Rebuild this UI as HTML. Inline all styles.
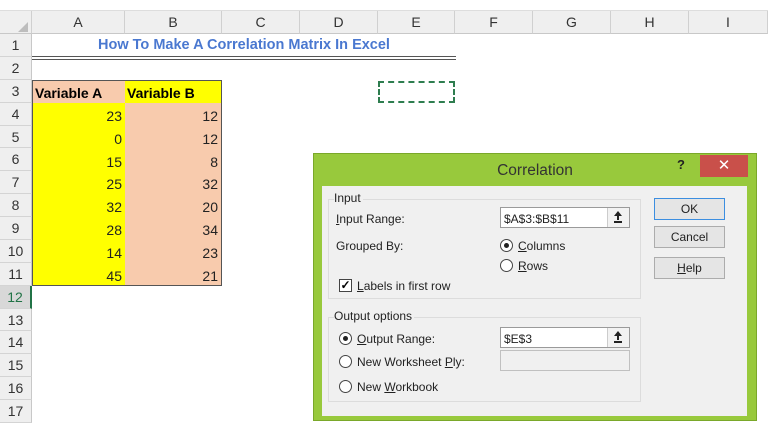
<!DOCTYPE html>
<html><head><meta charset="utf-8"><style>
*{margin:0;padding:0;box-sizing:border-box}
body{width:768px;height:426px;overflow:hidden;background:#fff;font-family:"Liberation Sans",sans-serif;position:relative}
.a{position:absolute}
.ch{position:absolute;top:11px;height:23px;background:#efefef;border-right:1px solid #d0d0d0;border-bottom:1px solid #c8c8c8;font-size:14px;color:#333;text-align:center;line-height:23px}
.rh{position:absolute;left:0;width:32px;background:#efefef;border-bottom:1px solid #d4d4d4;border-right:1px solid #c8c8c8;font-size:14px;color:#333;text-align:center}
.c{position:absolute;font-size:14px;color:#222;text-align:right;padding-right:3px}
.t{position:absolute;font-size:12px;color:#222;white-space:nowrap}
.rad{position:absolute;width:13px;height:13px;border:1px solid #444;border-radius:50%;background:#fff}
.rad.on::after{content:"";position:absolute;left:3px;top:3px;width:5px;height:5px;border-radius:50%;background:#222}
.box{position:absolute;background:#fff;border:1px solid #9a9a9a}
.up{position:absolute;width:22px;border-left:1px solid #ccc;background:#f2f2f2}
.up::before{content:"";position:absolute;left:6px;top:3px;width:0;height:0;border-left:4px solid transparent;border-right:4px solid transparent;border-bottom:5px solid #222}
.up i{position:absolute;left:9px;top:8px;width:2px;height:4px;background:#222}
.up::after{content:"";position:absolute;left:6px;top:13px;width:8px;height:2px;background:#222}
.btn{position:absolute;left:654px;width:71px;height:22px;border:1px solid #acacac;background:#e5e5e5;font-size:12px;text-align:center;line-height:20px;color:#222}
u{text-decoration:underline}
</style></head><body>
<div class="a" style="left:0;top:0;width:768px;height:11px;background:#fff;border-bottom:1px solid #ddd"></div>
<div class="ch" style="left:0;width:32px"></div>
<div class="a" style="left:18px;top:22px;width:0;height:0;border-left:10px solid transparent;border-bottom:10px solid #bdbdbd"></div>
<div class="ch" style="left:32px;width:93px">A</div>
<div class="ch" style="left:125px;width:97px">B</div>
<div class="ch" style="left:222px;width:78px">C</div>
<div class="ch" style="left:300px;width:78px">D</div>
<div class="ch" style="left:378px;width:77px">E</div>
<div class="ch" style="left:455px;width:78px">F</div>
<div class="ch" style="left:533px;width:78px">G</div>
<div class="ch" style="left:611px;width:78px">H</div>
<div class="ch" style="left:689px;width:79px">I</div>

<div class="rh" style="top:34px;height:23px;line-height:23px">1</div>
<div class="rh" style="top:57px;height:23px;line-height:23px">2</div>
<div class="rh" style="top:80px;height:23px;line-height:23px">3</div>
<div class="rh" style="top:103px;height:23px;line-height:23px">4</div>
<div class="rh" style="top:126px;height:22px;line-height:22px">5</div>
<div class="rh" style="top:148px;height:23px;line-height:23px">6</div>
<div class="rh" style="top:171px;height:23px;line-height:23px">7</div>
<div class="rh" style="top:194px;height:23px;line-height:23px">8</div>
<div class="rh" style="top:217px;height:23px;line-height:23px">9</div>
<div class="rh" style="top:240px;height:23px;line-height:23px">10</div>
<div class="rh" style="top:263px;height:23px;line-height:23px">11</div>
<div class="rh" style="top:286px;height:23px;line-height:23px;background:#d8d8d8;color:#217346;border-right:2px solid #217346">12</div>
<div class="rh" style="top:309px;height:22px;line-height:22px">13</div>
<div class="rh" style="top:331px;height:23px;line-height:23px">14</div>
<div class="rh" style="top:354px;height:23px;line-height:23px">15</div>
<div class="rh" style="top:377px;height:23px;line-height:23px">16</div>
<div class="rh" style="top:400px;height:23px;line-height:23px">17</div>

<div class="a" style="left:32px;top:37px;width:424px;text-align:center;font-size:14.5px;font-weight:bold;color:#4a78d0">How To Make A Correlation Matrix In Excel</div>
<div class="a" style="left:32px;top:56px;width:424px;height:4px;border-top:1px solid #555;border-bottom:1px solid #555"></div>
<div class="a" style="left:378px;top:81px;width:77px;height:22px;border:2px dashed #2e7d4f"></div>

<div class="a" style="left:32px;top:80px;width:190px;height:206px;border:1px solid #555"></div>
<div class="a" style="left:33px;top:81px;width:92px;height:22px;background:#f8cbad;font-size:14px;font-weight:bold;line-height:25px;padding-left:2px">Variable A</div>
<div class="a" style="left:125px;top:81px;width:96px;height:22px;background:#ffff00;font-size:14px;font-weight:bold;line-height:25px;padding-left:2px">Variable B</div>
<div class="a" style="left:33px;top:103px;width:92px;height:182px;background:#ffff00"></div>
<div class="a" style="left:125px;top:103px;width:96px;height:182px;background:#f8cbad"></div>
<div class="c" style="left:33px;top:105px;width:92px;line-height:22.8px">23<br>0<br>15<br>25<br>32<br>28<br>14<br>45</div>
<div class="c" style="left:125px;top:105px;width:96px;line-height:22.8px">12<br>12<br>8<br>32<br>20<br>34<br>23<br>21</div>

<!-- dialog -->
<div class="a" style="left:313px;top:153px;width:444px;height:268px;background:#98c93c;border:1px solid #7aa82a"></div>
<div class="a" style="left:313px;top:162px;width:444px;text-align:center;font-size:15.5px;color:#333">Correlation</div>
<div class="a" style="left:677px;top:157px;font-size:13px;font-weight:bold;color:#222">?</div>
<div class="a" style="left:700px;top:155px;width:48px;height:22px;background:#c9504a;color:#fff;text-align:center;font-size:15px;line-height:22px">✕</div>
<div class="a" style="left:322px;top:186px;width:425px;height:230px;background:#f0f0f0"></div>

<div class="a" style="left:328px;top:199px;width:313px;height:100px;border:1px solid #dcdcdc"></div>
<div class="t" style="left:334px;top:191px;background:#f0f0f0;padding-right:2px">Input</div>
<div class="t" style="left:336px;top:212px"><u>I</u>nput Range:</div>
<div class="box" style="left:500px;top:207px;width:130px;height:21px"></div>
<div class="t" style="left:504px;top:212px">$A$3:$B$11</div>
<div class="up" style="left:607px;top:208px;height:19px"><i></i></div>
<div class="t" style="left:336px;top:239px">Grouped By:</div>
<div class="rad on" style="left:500px;top:239px"></div>
<div class="t" style="left:518px;top:239px"><u>C</u>olumns</div>
<div class="rad" style="left:500px;top:259px"></div>
<div class="t" style="left:518px;top:259px"><u>R</u>ows</div>
<div class="a" style="left:339px;top:279px;width:13px;height:13px;border:1px solid #444;background:#fff;font-size:12px;line-height:11px;text-align:center;font-weight:bold">✓</div>
<div class="t" style="left:357px;top:279px"><u>L</u>abels in first row</div>

<div class="a" style="left:328px;top:317px;width:313px;height:85px;border:1px solid #dcdcdc"></div>
<div class="t" style="left:334px;top:309px;background:#f0f0f0;padding-right:2px">Output options</div>
<div class="rad on" style="left:339px;top:332px"></div>
<div class="t" style="left:357px;top:332px"><u>O</u>utput Range:</div>
<div class="box" style="left:500px;top:327px;width:130px;height:21px"></div>
<div class="t" style="left:504px;top:332px">$E$3</div>
<div class="up" style="left:607px;top:328px;height:19px"><i></i></div>
<div class="rad" style="left:339px;top:355px"></div>
<div class="t" style="left:357px;top:355px">New Worksheet <u>P</u>ly:</div>
<div class="box" style="left:500px;top:350px;width:130px;height:21px;background:#f0f0f0;border-color:#c0c0c0"></div>
<div class="rad" style="left:339px;top:380px"></div>
<div class="t" style="left:357px;top:380px">New <u>W</u>orkbook</div>

<div class="btn" style="top:198px;border-color:#3c8ee0">OK</div>
<div class="btn" style="top:226px">Cancel</div>
<div class="btn" style="top:257px"><u>H</u>elp</div>
</body></html>
